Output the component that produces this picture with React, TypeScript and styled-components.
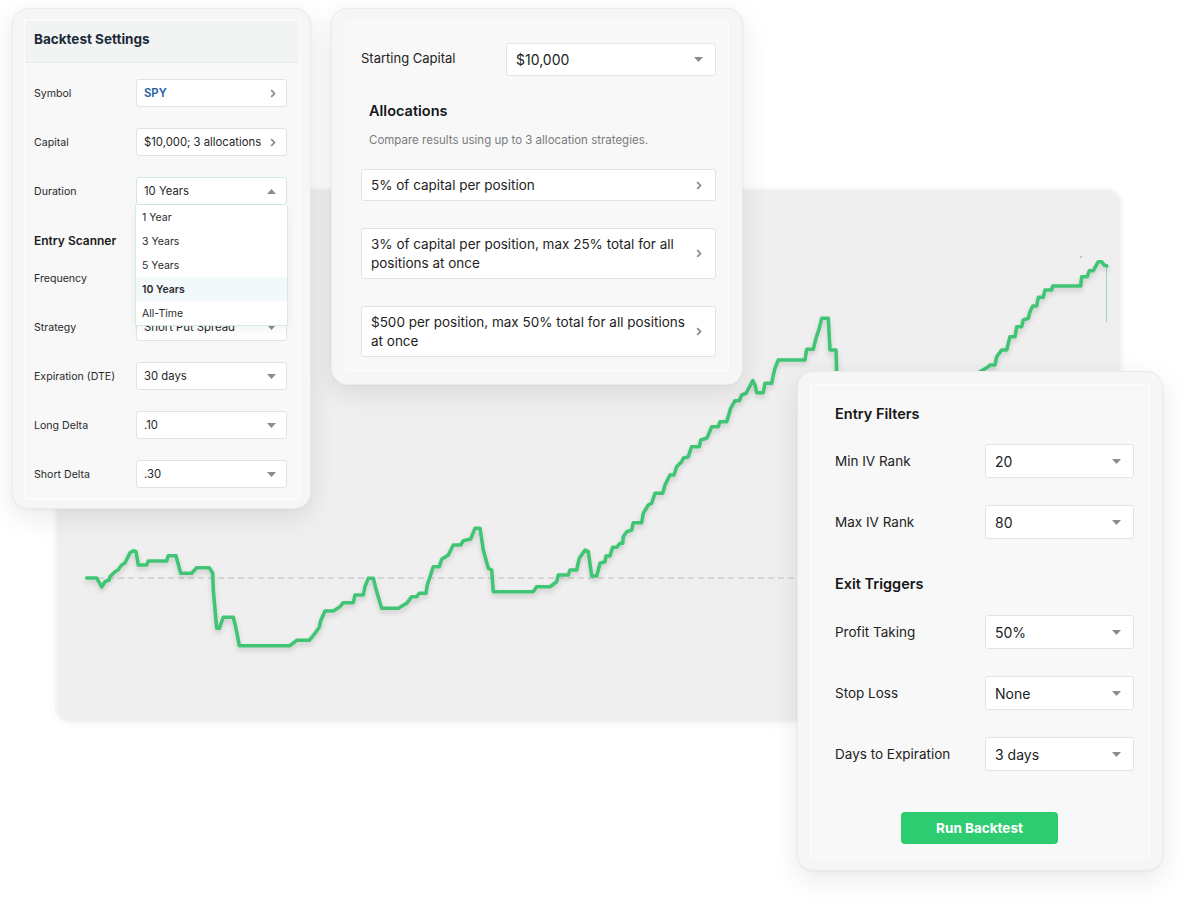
import styled, { createGlobalStyle } from "styled-components";

//global
const GlobalStyle = createGlobalStyle`
  html, body {
    margin: 0;
    padding: 0;
    background: #ffffff;
  }
  body {
    font-family: Inter, "Noto Sans", "Liberation Sans", sans-serif;
    color: #1f1f1f;
    -webkit-font-smoothing: antialiased;
  }
  * {
    box-sizing: border-box;
  }
`;

//styled-components
const Stage = styled.div`
  position: relative;
  width: 1198px;
  height: 911px;
  overflow: hidden;
  background: #ffffff;
`;

const ChartBoard = styled.div`
  position: absolute;
  left: 55px;
  top: 188px;
  width: 1067px;
  height: 535px;
  border-radius: 16px;
  background: #efefef;
  box-shadow: inset 0 0 0 2px #f5f5f5, 0 2px 10px rgba(0, 0, 0, 0.03);

  svg {
    display: block;
    width: 100%;
    height: 100%;
  }
`;

const Window = styled.div<{ $x: number; $y: number; $w: number; $h: number; $pad: string }>`
  position: absolute;
  left: ${(p) => p.$x}px;
  top: ${(p) => p.$y}px;
  width: ${(p) => p.$w}px;
  height: ${(p) => p.$h}px;
  padding: ${(p) => p.$pad};
  display: flex;
  background: #f6f6f6;
  border: 1px solid #ebebeb;
  border-radius: 16px;
  box-shadow: 0 8px 28px rgba(0, 0, 0, 0.09), 0 1px 3px rgba(0, 0, 0, 0.04);
`;

const Panel = styled.div<{ $pad?: string }>`
  flex: 1;
  min-height: 0;
  display: flex;
  flex-direction: column;
  padding: ${(p) => p.$pad || "0"};
  background: #f8f8f8;
  border: 1px solid #fdfdfd;
`;

const PanelHeader = styled.div`
  flex-shrink: 0;
  height: 42px;
  display: flex;
  align-items: center;
  padding: 0 0 6px 9px;
  background: #f2f4f4;
  border-bottom: 1px solid #e7eaea;
  font-size: 13.5px;
  font-weight: 700;
  color: #1c2b3a;
`;

const SettingsBody = styled.div`
  display: flex;
  flex-direction: column;
  padding: 16px 12px 0 9px;
`;

const SmallRow = styled.div`
  flex-shrink: 0;
  display: flex;
  align-items: center;
  height: 28px;
  margin-bottom: 21px;
`;

const SmallLabel = styled.div`
  width: 102px;
  font-size: 10.6px;
  color: #2a2a2a;
`;

const SmallHeading = styled.div`
  flex-shrink: 0;
  height: 20px;
  margin: 4px 0 14px;
  display: flex;
  align-items: center;
  font-size: 12px;
  font-weight: 600;
  color: #1a1a1a;
`;

const SmallSelect = styled.div<{ $focused?: boolean }>`
  position: relative;
  width: 151px;
  height: 28px;
  display: flex;
  align-items: center;
  justify-content: space-between;
  padding: 0 10px 0 7px;
  background: #ffffff;
  border: 1px solid ${(p) => (p.$focused ? "#cde9d9" : "#e3e3e3")};
  border-radius: 3px;
  font-size: 11.3px;
  color: #262626;
`;

const SymbolValue = styled.span`
  color: #1b5e9e;
  font-weight: 600;
`;

const Menu = styled.div`
  position: absolute;
  top: calc(100% + 1px);
  left: -2px;
  right: -2px;
  z-index: 3;
  background: #ffffff;
  border: 1px solid #d3ecdd;
  border-top: none;
  box-shadow: 0 4px 10px rgba(0, 0, 0, 0.05);
`;

const MenuItem = styled.div<{ $active?: boolean }>`
  height: 24px;
  display: flex;
  align-items: center;
  padding-left: 6px;
  font-size: 10.5px;
  font-weight: ${(p) => (p.$active ? 600 : 400)};
  color: #2b2b2b;
  background: ${(p) => (p.$active ? "#f3f8fb" : "#ffffff")};
`;

const CapitalRow = styled.div`
  display: flex;
  align-items: center;
  height: 33px;
`;

const CapitalLabel = styled.div`
  width: 145px;
  padding-bottom: 3px;
  font-size: 13px;
  color: #222;
`;

const Select = styled.div<{ $w?: number; $h: number }>`
  width: ${(p) => (p.$w ? `${p.$w}px` : "auto")};
  flex: ${(p) => (p.$w ? "none" : "1")};
  height: ${(p) => p.$h}px;
  display: flex;
  align-items: center;
  justify-content: space-between;
  padding: 0 12px 0 9px;
  background: #ffffff;
  border: 1px solid #e4e4e4;
  border-radius: 3px;
  font-size: 14px;
  color: #222;
`;

const SectionTitle = styled.div<{ $top: number; $indent?: number }>`
  margin-top: ${(p) => p.$top}px;
  padding-left: ${(p) => p.$indent || 0}px;
  height: 20px;
  line-height: 20px;
  font-size: 14.5px;
  font-weight: 600;
  color: #161616;
`;

const Hint = styled.div`
  margin-top: 11px;
  padding-left: 8px;
  line-height: 16px;
  font-size: 11.5px;
  color: #7b7b7b;
`;

const AllocationList = styled.div`
  display: flex;
  flex-direction: column;
  gap: 27px;
  margin-top: 21px;
`;

const Allocation = styled.div`
  display: flex;
  align-items: center;
  justify-content: space-between;
  padding: 5.5px 13px 5.5px 9px;
  background: #ffffff;
  border: 1px solid #e3e3e3;
  border-radius: 3px;
  font-size: 13.5px;
  line-height: 19px;
  color: #1e1e1e;
`;

const AllocationText = styled.div`
  max-width: 318px;
`;

const FilterRow = styled.div<{ $top: number }>`
  display: flex;
  align-items: center;
  margin-top: ${(p) => p.$top}px;
`;

const FilterLabel = styled.div`
  width: 150px;
  font-size: 13.5px;
  color: #222;
`;

const RunButton = styled.button`
  align-self: center;
  margin: 41px 10px 0 0;
  width: 157px;
  height: 32px;
  border: none;
  border-radius: 4px;
  background: #2ecc71;
  color: #ffffff;
  font-family: inherit;
  font-size: 13.5px;
  font-weight: 700;
`;

//icons
const Chevron = () => (
  <svg width="6" height="9" viewBox="0 0 6 9">
    <path d="M1.2 1.2 L4.5 4.5 L1.2 7.8" fill="none" stroke="#8a8a8a" strokeWidth="1.7" />
  </svg>
);

const Caret = ({ up }: { up?: boolean }) => (
  <svg width="9" height="5" viewBox="0 0 9 5">
    <path d={up ? "M0 5 L4.5 0 L9 5 Z" : "M0 0 L9 0 L4.5 5 Z"} fill="#8c8c8c" />
  </svg>
);

//data
const linePoints =
  "86.7,578 96.7,578 101.7,587 105,581.7 109,580 110,576.7 115,571.7 118,570 121.7,565 125,563 130,552.7 133.3,550.7 136,551.7 138.3,565 146.7,565 148.3,561 166.7,561 168.3,555.7 176,555.7 180.7,573.3 191.7,573.3 196.7,567.7 209.3,567.7 212.7,573.3 213.3,590 216.7,628.3 219.3,628.3 223.3,617.3 233.3,617.3 236,628.3 239.3,645.7 290,645.7 296.7,640.3 309.3,640.3 315,633.3 319.3,627.3 320.7,620.7 325,611 333.3,611 340,606.7 343.3,602.7 353.3,602.7 355,595 363.3,595 365,586.7 368.3,578.3 373.3,578.3 376,589.3 381.7,608.3 398.3,608.3 406.7,603.3 411.7,596.7 416.7,596.7 419.3,593.3 426,593.3 427.3,585 430,576.7 433.3,566.7 439.3,566.7 441.7,559.3 448.3,555 453.3,545 460.7,545 463.3,540.7 470.7,539 475,528.3 480,528.3 483.3,550 488.3,568.3 491.7,570 493.3,591.7 533.3,591.7 536.7,586.7 550,586.7 556.7,581.7 558.3,575 568.3,575 570,570 576.7,570 579.3,558.3 585,550 588.3,551.7 591.7,576 596.7,576 600,563.3 605,561.7 606,556 610,556 612.7,547.3 616.7,547.3 620,543.3 622.7,543.3 623.3,536.7 626.7,531.7 631.7,530 633.3,522.7 641.7,522.7 643.3,513.3 648.3,505 651.7,503.3 655,493.3 662.7,493.3 665,485 670,475 674,475 676.7,466.7 681.7,461.7 683.3,458.3 688.3,456.7 691.7,446.7 699.3,446.7 700.7,440 706.7,438.3 708.3,435 711.7,426.7 718.3,426.7 720,421.7 726.7,421.7 730.7,408.3 735,400.7 739.3,400.7 741.7,395 746,393.3 750,386 752.7,380.7 755,385 756.7,392.7 763.3,392.7 765,383.3 771.7,383.3 773.3,375 775,368.3 778.3,360 805,360 806.7,349.3 813.3,349.3 816,338.3 819.3,328.3 821.7,318.3 828.3,318.3 830,350 836,350 836.7,373.3 838,400 860,410 900,420 940,400 975,385 980,371.7 988.3,366.7 990,365 995,365 996.7,356.7 1001.7,350 1006.7,350 1008.3,343.3 1010,336.7 1015,336.7 1016.7,326.7 1021.7,326.7 1023.3,320 1028.3,318.3 1030,311.7 1032.7,306 1036.7,306 1038.3,297.3 1043.3,297.3 1045,290 1051.7,290 1052.7,286 1080.7,286 1081.7,276.7 1087.3,276.7 1089.3,270.7 1093.3,270.7 1098.3,261.7 1101.7,261.7 1104,265 1106.7,266";

const durations = ["1 Year", "3 Years", "5 Years", "10 Years", "All-Time"];

const scannerRows = [
  ["Frequency", ""],
  ["Strategy", "Short Put Spread"],
  ["Expiration (DTE)", "30 days"],
  ["Long Delta", ".10"],
  ["Short Delta", ".30"],
];

const allocations = [
  "5% of capital per position",
  "3% of capital per position, max 25% total for all positions at once",
  "$500 per position, max 50% total for all positions at once",
];

const filters = [
  { label: "Min IV Rank", value: "20", top: 20 },
  { label: "Max IV Rank", value: "80", top: 27 },
];

const triggers = [
  { label: "Profit Taking", value: "50%", top: 21 },
  { label: "Stop Loss", value: "None", top: 27 },
  { label: "Days to Expiration", value: "3 days", top: 27 },
];

//Components
const EquityChart = () => (
  <ChartBoard>
    <svg viewBox="55 188 1067 535">
      <defs>
        <filter id="lineShadow" x="-5%" y="-5%" width="110%" height="120%">
          <feDropShadow dx="0" dy="3" stdDeviation="2.5" floodColor="#000" floodOpacity="0.16" />
        </filter>
      </defs>
      <line x1="88" y1="578" x2="800" y2="578" stroke="#bcbcbc" strokeWidth="1.2" strokeDasharray="6 4" />
      <line x1="1106.5" y1="266" x2="1106.5" y2="322" stroke="#41c574" strokeWidth="1" opacity="0.5" />
      <circle cx="1081" cy="257" r="0.8" fill="#888" />
      <polyline
        points={linePoints}
        fill="none"
        stroke="#41c574"
        strokeWidth="3.6"
        strokeLinejoin="round"
        strokeLinecap="round"
        filter="url(#lineShadow)"
      />
    </svg>
  </ChartBoard>
);

const SettingsCard = () => (
  <Window $x={12} $y={8} $w={299} $h={501} $pad="11px 10px 8px 11px">
    <Panel>
      <PanelHeader>Backtest Settings</PanelHeader>
      <SettingsBody>
        <SmallRow>
          <SmallLabel>Symbol</SmallLabel>
          <SmallSelect>
            <SymbolValue>SPY</SymbolValue>
            <Chevron />
          </SmallSelect>
        </SmallRow>
        <SmallRow>
          <SmallLabel>Capital</SmallLabel>
          <SmallSelect>
            <span>$10,000; 3 allocations</span>
            <Chevron />
          </SmallSelect>
        </SmallRow>
        <SmallRow>
          <SmallLabel>Duration</SmallLabel>
          <SmallSelect $focused>
            <span>10 Years</span>
            <Caret up />
            <Menu>
              {durations.map((d) => (
                <MenuItem key={d} $active={d === "10 Years"}>
                  {d}
                </MenuItem>
              ))}
            </Menu>
          </SmallSelect>
        </SmallRow>
        <SmallHeading>Entry Scanner</SmallHeading>
        {scannerRows.map(([label, value]) => (
          <SmallRow key={label}>
            <SmallLabel>{label}</SmallLabel>
            <SmallSelect>
              <span>{value}</span>
              <Caret />
            </SmallSelect>
          </SmallRow>
        ))}
      </SettingsBody>
    </Panel>
  </Window>
);

const CapitalCard = () => (
  <Window $x={331} $y={8} $w={412} $h={377} $pad="13px">
    <Panel $pad="20px 12px 0 15px">
      <CapitalRow>
        <CapitalLabel>Starting Capital</CapitalLabel>
        <Select $h={33}>
          <span>$10,000</span>
          <Caret />
        </Select>
      </CapitalRow>
      <SectionTitle $top={25} $indent={8}>
        Allocations
      </SectionTitle>
      <Hint>Compare results using up to 3 allocation strategies.</Hint>
      <AllocationList>
        {allocations.map((a) => (
          <Allocation key={a}>
            <AllocationText>{a}</AllocationText>
            <Chevron />
          </Allocation>
        ))}
      </AllocationList>
    </Panel>
  </Window>
);

const FiltersCard = () => (
  <Window $x={797} $y={371} $w={366} $h={500} $pad="12px">
    <Panel $pad="19px 15px 0 24px">
      <SectionTitle $top={0}>Entry Filters</SectionTitle>
      {filters.map((f) => (
        <FilterRow key={f.label} $top={f.top}>
          <FilterLabel>{f.label}</FilterLabel>
          <Select $w={149} $h={34}>
            <span>{f.value}</span>
            <Caret />
          </Select>
        </FilterRow>
      ))}
      <SectionTitle $top={35}>Exit Triggers</SectionTitle>
      {triggers.map((f) => (
        <FilterRow key={f.label} $top={f.top}>
          <FilterLabel>{f.label}</FilterLabel>
          <Select $w={149} $h={34}>
            <span>{f.value}</span>
            <Caret />
          </Select>
        </FilterRow>
      ))}
      <RunButton>Run Backtest</RunButton>
    </Panel>
  </Window>
);

const App = () => {
  return (
    <>
      <GlobalStyle />
      <Stage>
        <EquityChart />
        <SettingsCard />
        <CapitalCard />
        <FiltersCard />
      </Stage>
    </>
  );
};

export default App;
